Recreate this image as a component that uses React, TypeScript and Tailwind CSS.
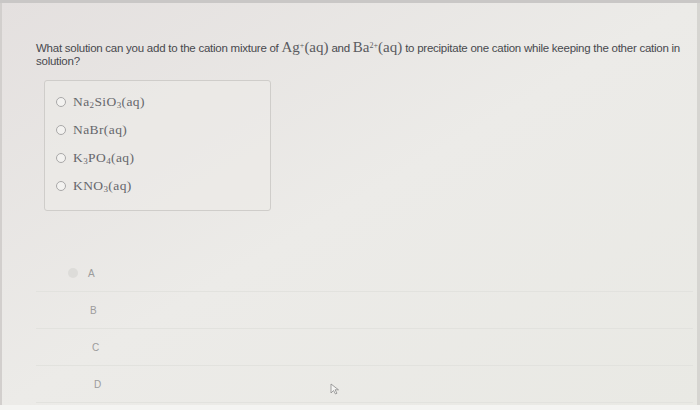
import React from "react";

const options = [
  { id: "a", label: <>Na<sub>2</sub>SiO<sub>3</sub>(aq)</> },
  { id: "b", label: <>NaBr(aq)</> },
  { id: "c", label: <>K<sub>3</sub>PO<sub>4</sub>(aq)</> },
  { id: "d", label: <>KNO<sub>3</sub>(aq)</> },
];

const letters = ["A", "B", "C", "D"];

const App = (): React.ReactElement => {
  return (
    <div className="w-[700px] h-[410px] overflow-hidden bg-gradient-to-br from-[#e4e0df] via-[#ecebe8] to-[#e9e9e4] relative">
      <div className="h-[3px] bg-[#c9c7c6]" />
      <div className="flex h-[402px]">
        <div className="w-[2px] bg-[#d2cfcd]" />
        <div className="flex-1 pl-[34px] pt-[37px] pr-[4px]">
          <p className="text-[11.5px] leading-[13px] text-[#48494e] font-['Liberation_Sans',sans-serif] tracking-[-0.25px] whitespace-nowrap">
            <span>What solution can you add to the cation mixture of </span>
            <span className="font-['Liberation_Serif',serif] text-[15px] leading-none text-[#5a5b60] tracking-normal">
              Ag<sup className="text-[8px]">+</sup>(aq)
            </span>
            <span> and </span>
            <span className="font-['Liberation_Serif',serif] text-[15px] leading-none text-[#5a5b60] tracking-normal">
              Ba<sup className="text-[8px]">2+</sup>(aq)
            </span>
            <span> to precipitate one cation while keeping the other cation in</span>
            <br />
            <span>solution?</span>
          </p>
          <div className="mt-[12px] ml-[8px] w-[227px] h-[131px] border border-[#cfcdca] rounded-[3px] pt-[13px] pl-[11px] bg-[#ecebe8]/60">
            <div className="flex flex-col gap-[12px]">
              {options.map((o) => (
                <label key={o.id} className="flex items-center gap-[7px] h-[16px]">
                  <span className="w-[10px] h-[10px] rounded-full border border-[#a9a8a8] bg-[#f3f2f0]" />
                  <span className="font-['Liberation_Serif',serif] text-[13.5px] tracking-[0.4px] text-[#66676c] leading-none [&_sub]:text-[9px] [&_sub]:bottom-[-0.15em]">
                    {o.label}
                  </span>
                </label>
              ))}
            </div>
          </div>
          <div className="mt-[44px] flex flex-col">
            {letters.map((l, i) => (
              <div key={l} className="h-[37px] flex items-center border-b border-[#e2e2de]">
                <span className="w-[10px] h-[10px] ml-[32px] rounded-full bg-[#dddcd9]" style={{ opacity: i === 0 ? 1 : 0 }} />
                <span className="text-[10px] text-[#9c9c9c] font-['Liberation_Sans',sans-serif]" style={{ marginLeft: 10 + i * 2 }}>
                  {l}
                </span>
              </div>
            ))}
          </div>
        </div>
        <div className="w-[3px] bg-[#d6d5d1]" />
      </div>
      <div className="h-[5px] bg-[#f4f4f2]" />
      <svg className="absolute left-[330px] top-[383px]" width="10" height="12" viewBox="0 0 10 12">
        <path d="M1 1 L1 10 L3.5 7.5 L5.5 11 L7 10.2 L5 6.8 L8.5 6.8 Z" fill="#f5f5f3" stroke="#8a8a8a" strokeWidth="0.8" />
      </svg>
    </div>
  );
};

export default App;
